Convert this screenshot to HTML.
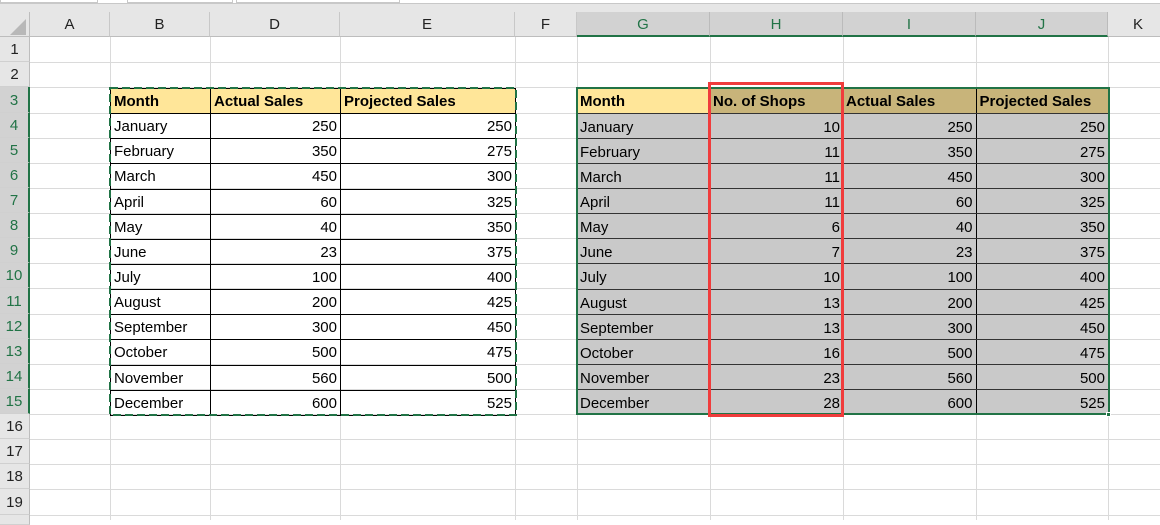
<!DOCTYPE html>
<html><head><meta charset="utf-8"><style>
*{box-sizing:border-box;margin:0;padding:0}
body{width:1160px;height:520px;overflow:hidden;background:#fff;position:relative;font-family:"Liberation Sans",sans-serif;color:#000}
.top{position:absolute;left:0;width:1160px;background:#e6e6e6;border-top:1px solid #c8c8c8;top:3px;height:9px}
.topw{position:absolute;left:0;top:0;width:1160px;height:3px;background:#fff}
.box{position:absolute;top:0;height:3px;background:#fff;border:1px solid #c8c8c8;border-top:none}
.colhdr{position:absolute;top:12px;height:25px;background:#e6e6e6;border-bottom:1px solid #bdbdbd;font-size:15px;color:#222;text-align:center;line-height:26px}
.colhdr.sel{background:#d2d2d2;color:#217346;border-bottom:2px solid #217346}
.rowhdr{position:absolute;left:0;width:30px;background:#e6e6e6;border-right:1px solid #bdbdbd;font-size:15px;color:#222;text-align:center;border-bottom:1px solid #d0d0d0;padding-top:1px}
.rowhdr.sel{background:#d2d2d2;color:#217346;border-right:2px solid #217346}
.vl{position:absolute;top:37px;width:1px;height:483px;background:#dadada}
.hl{position:absolute;left:30px;width:1130px;height:1px;background:#dadada}
table{position:absolute;border-collapse:collapse;table-layout:fixed;font-size:15px}
tr{height:25.15px}
td{height:25.15px;padding:3px 3px 0 3px;white-space:nowrap;overflow:hidden;line-height:19px;vertical-align:top}
.L td{border:1px solid #000}
.L tr:first-child td{background:#ffe699;font-weight:bold}
td.n{text-align:right}
.R td{background:#c9c9c9;border-bottom:1px solid #333;padding-top:4px}
.R tr:first-child td{background:#c8b47a;font-weight:bold}
.R tr:first-child td:first-child{background:#ffe699}
.R td.bl{border-left:1px solid #000}
</style></head><body>
<div class="topw"></div>
<div class="top"></div>
<div class="box" style="left:0;width:98px"></div>
<div class="box" style="left:127px;width:106px"></div>
<div class="box" style="left:236px;width:164px"></div>

<div class="colhdr" style="left:0;width:30px;border-right:1px solid #bdbdbd"><svg width="30" height="25" style="position:absolute;left:0;top:0"><polygon points="10,23 26,23 26,7" fill="#b8b8b8"/></svg></div>
<div class="colhdr" style="left:30px;width:80px;border-right:1px solid #c8c8c8">A</div>
<div class="colhdr" style="left:110px;width:100px;border-right:1px solid #c8c8c8">B</div>
<div class="colhdr" style="left:210px;width:130px;border-right:1px solid #c8c8c8">D</div>
<div class="colhdr" style="left:340px;width:175px;border-right:1px solid #c8c8c8">E</div>
<div class="colhdr" style="left:515px;width:62px;border-right:1px solid #c8c8c8">F</div>
<div class="colhdr sel" style="left:577px;width:133px;border-right:1px solid #bbb">G</div>
<div class="colhdr sel" style="left:710px;width:133px;border-right:1px solid #bbb">H</div>
<div class="colhdr sel" style="left:843px;width:133px;border-right:1px solid #bbb">I</div>
<div class="colhdr sel" style="left:976px;width:132px;border-right:1px solid #bbb">J</div>
<div class="colhdr" style="left:1108px;width:60px">K</div>

<div class="vl" style="left:110px"></div><div class="vl" style="left:210px"></div><div class="vl" style="left:340px"></div><div class="vl" style="left:515px"></div><div class="vl" style="left:577px"></div><div class="vl" style="left:710px"></div><div class="vl" style="left:843px"></div><div class="vl" style="left:976px"></div><div class="vl" style="left:1108px"></div>

<div class="hl" style="top:62px"></div><div class="hl" style="top:87px"></div><div class="hl" style="top:113px"></div><div class="hl" style="top:138px"></div><div class="hl" style="top:163px"></div><div class="hl" style="top:188px"></div><div class="hl" style="top:213px"></div><div class="hl" style="top:238px"></div><div class="hl" style="top:263px"></div><div class="hl" style="top:288px"></div><div class="hl" style="top:314px"></div><div class="hl" style="top:339px"></div><div class="hl" style="top:364px"></div><div class="hl" style="top:389px"></div><div class="hl" style="top:414px"></div><div class="hl" style="top:439px"></div><div class="hl" style="top:464px"></div><div class="hl" style="top:489px"></div><div class="hl" style="top:515px"></div>

<div class="rowhdr" style="top:37px;height:25px;line-height:24px">1</div>
<div class="rowhdr" style="top:62px;height:25px;line-height:24px">2</div>
<div class="rowhdr sel" style="top:87px;height:26px;line-height:25px">3</div>
<div class="rowhdr sel" style="top:113px;height:25px;line-height:24px">4</div>
<div class="rowhdr sel" style="top:138px;height:25px;line-height:24px">5</div>
<div class="rowhdr sel" style="top:163px;height:25px;line-height:24px">6</div>
<div class="rowhdr sel" style="top:188px;height:25px;line-height:24px">7</div>
<div class="rowhdr sel" style="top:213px;height:25px;line-height:24px">8</div>
<div class="rowhdr sel" style="top:238px;height:25px;line-height:24px">9</div>
<div class="rowhdr sel" style="top:263px;height:25px;line-height:24px">10</div>
<div class="rowhdr sel" style="top:288px;height:26px;line-height:25px">11</div>
<div class="rowhdr sel" style="top:314px;height:25px;line-height:24px">12</div>
<div class="rowhdr sel" style="top:339px;height:25px;line-height:24px">13</div>
<div class="rowhdr sel" style="top:364px;height:25px;line-height:24px">14</div>
<div class="rowhdr sel" style="top:389px;height:25px;line-height:24px">15</div>
<div class="rowhdr" style="top:414px;height:25px;line-height:24px">16</div>
<div class="rowhdr" style="top:439px;height:25px;line-height:24px">17</div>
<div class="rowhdr" style="top:464px;height:25px;line-height:24px">18</div>
<div class="rowhdr" style="top:489px;height:26px;line-height:25px">19</div>
<div class="rowhdr" style="top:515px;height:10px"></div>

<table class="L" style="left:110px;top:88px;width:405px">
<colgroup><col style="width:100px"><col style="width:130px"><col style="width:175px"></colgroup>
<tr><td>Month</td><td>Actual Sales</td><td>Projected Sales</td></tr>
<tr><td>January</td><td class="n">250</td><td class="n">250</td></tr>
<tr><td>February</td><td class="n">350</td><td class="n">275</td></tr>
<tr><td>March</td><td class="n">450</td><td class="n">300</td></tr>
<tr><td>April</td><td class="n">60</td><td class="n">325</td></tr>
<tr><td>May</td><td class="n">40</td><td class="n">350</td></tr>
<tr><td>June</td><td class="n">23</td><td class="n">375</td></tr>
<tr><td>July</td><td class="n">100</td><td class="n">400</td></tr>
<tr><td>August</td><td class="n">200</td><td class="n">425</td></tr>
<tr><td>September</td><td class="n">300</td><td class="n">450</td></tr>
<tr><td>October</td><td class="n">500</td><td class="n">475</td></tr>
<tr><td>November</td><td class="n">560</td><td class="n">500</td></tr>
<tr><td>December</td><td class="n">600</td><td class="n">525</td></tr>
</table>
<svg style="position:absolute;left:108px;top:86px" width="410" height="331"><rect x="2" y="2" width="406" height="327" fill="none" stroke="#217346" stroke-width="2" stroke-dasharray="8,4"/></svg>

<table class="R" style="left:577px;top:88px;width:531px">
<colgroup><col style="width:133px"><col style="width:133px"><col style="width:133px"><col style="width:132px"></colgroup>
<tr><td>Month</td><td>No. of Shops</td><td>Actual Sales</td><td class="bl">Projected Sales</td></tr>
<tr><td>January</td><td class="n">10</td><td class="n">250</td><td class="n bl">250</td></tr>
<tr><td>February</td><td class="n">11</td><td class="n">350</td><td class="n bl">275</td></tr>
<tr><td>March</td><td class="n">11</td><td class="n">450</td><td class="n bl">300</td></tr>
<tr><td>April</td><td class="n">11</td><td class="n">60</td><td class="n bl">325</td></tr>
<tr><td>May</td><td class="n">6</td><td class="n">40</td><td class="n bl">350</td></tr>
<tr><td>June</td><td class="n">7</td><td class="n">23</td><td class="n bl">375</td></tr>
<tr><td>July</td><td class="n">10</td><td class="n">100</td><td class="n bl">400</td></tr>
<tr><td>August</td><td class="n">13</td><td class="n">200</td><td class="n bl">425</td></tr>
<tr><td>September</td><td class="n">13</td><td class="n">300</td><td class="n bl">450</td></tr>
<tr><td>October</td><td class="n">16</td><td class="n">500</td><td class="n bl">475</td></tr>
<tr><td>November</td><td class="n">23</td><td class="n">560</td><td class="n bl">500</td></tr>
<tr><td>December</td><td class="n">28</td><td class="n">600</td><td class="n bl">525</td></tr>
</table>
<div style="position:absolute;left:576px;top:87px;width:534px;height:328px;border:2px solid #217346"></div>
<div style="position:absolute;left:1106px;top:412px;width:5px;height:5px;background:#217346;border:1px solid #fff"></div>
<div style="position:absolute;left:708px;top:82px;width:136px;height:335px;border:3px solid #f03c3c"></div>
</body></html>
